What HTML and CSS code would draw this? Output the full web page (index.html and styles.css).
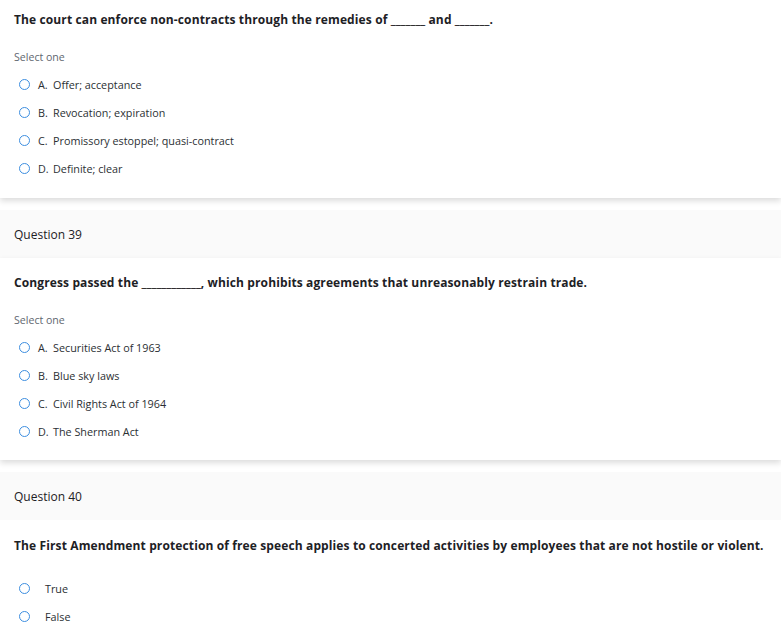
FILE: index.html
```html
<!DOCTYPE html>
<html>
<head>
<meta charset="utf-8">
<link rel="stylesheet" href="styles.css">
</head>
<body>
<div class="card first">
  <div class="qtext">The court can enforce non-contracts through the remedies of <span class="blank">_______</span> and <span class="blank">_______</span>.</div>
  <div class="prompt">Select one</div>
  <div class="answers">
    <div class="opt"><span class="radio"></span><span class="letter">A.</span><span>Offer; acceptance</span></div>
    <div class="opt"><span class="radio"></span><span class="letter">B.</span><span>Revocation; expiration</span></div>
    <div class="opt"><span class="radio"></span><span class="letter">C.</span><span>Promissory estoppel; quasi-contract</span></div>
    <div class="opt"><span class="radio"></span><span class="letter">D.</span><span>Definite; clear</span></div>
  </div>
</div>
<div class="qhead">Question 39</div>
<div class="card">
  <div class="qtext">Congress passed the <span class="blank">____________</span>, which prohibits agreements that unreasonably restrain trade.</div>
  <div class="prompt">Select one</div>
  <div class="answers">
    <div class="opt"><span class="radio"></span><span class="letter">A.</span><span>Securities Act of 1963</span></div>
    <div class="opt"><span class="radio"></span><span class="letter">B.</span><span>Blue sky laws</span></div>
    <div class="opt"><span class="radio"></span><span class="letter">C.</span><span>Civil Rights Act of 1964</span></div>
    <div class="opt"><span class="radio"></span><span class="letter">D.</span><span>The Sherman Act</span></div>
  </div>
</div>
<div class="qhead">Question 40</div>
<div class="card last">
  <div class="qtext">The First Amendment protection of free speech applies to concerted activities by employees that are not hostile or violent.</div>
  <div class="answers tf">
    <div class="opt"><span class="radio"></span><span class="tflabel">True</span></div>
    <div class="opt"><span class="radio"></span><span class="tflabel">False</span></div>
  </div>
</div>
</body>
</html>
```
FILE: styles.css
```css
html, body {
  margin: 0;
  padding: 0;
  background: #ffffff;
}
body {
  font-family: "Open Sans", "Liberation Sans", sans-serif;
  color: #1d2125;
  width: 781px;
  overflow: hidden;
}
.card {
  background: #ffffff;
  padding: 16px 14px 20px 14px;
  box-shadow: 0 3px 6px rgba(0, 0, 0, 0.14);
  margin-bottom: 12px;
  position: relative;
}
.card.first {
  padding-top: 11px;
  padding-bottom: 21px;
}
.card.last {
  padding-top: 17px;
  box-shadow: none;
  margin-bottom: 0;
}
.qtext {
  font-size: 12px;
  letter-spacing: 0.12px;
  font-weight: 700;
  line-height: 18px;
  color: #1d2125;
}
.blank {
  letter-spacing: 0;
}
.prompt {
  font-size: 10.6px;
  line-height: 14px;
  color: #5f6770;
  margin-top: 21px;
}
.answers {
  margin-top: 11px;
  display: flex;
  flex-direction: column;
  gap: 10px;
  padding-left: 5px;
}
.answers.tf {
  margin-top: 24px;
}
.opt {
  display: flex;
  align-items: center;
  height: 18px;
  font-size: 10.8px;
  color: #2b2f33;
}
.radio {
  width: 9px;
  height: 9px;
  border: 1.7px solid #3d8ee0;
  border-radius: 50%;
  flex: none;
  margin-right: 8px;
}
.letter {
  width: 15px;
  flex: none;
}
.tflabel {
  margin-left: 7px;
}
.qhead {
  background: #fafafa;
  height: 48px;
  display: flex;
  align-items: center;
  padding-left: 14px;
  font-size: 12px;
  color: #1d2125;
}
```
